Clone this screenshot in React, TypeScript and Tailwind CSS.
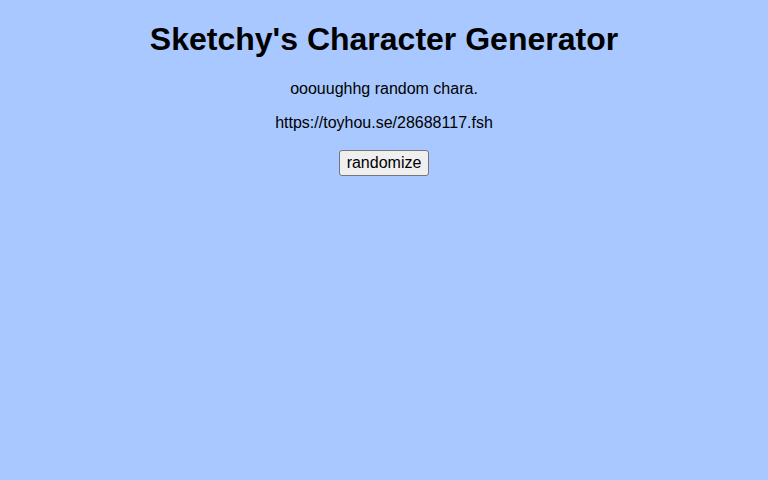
export default function App() {
  return (
    <div className="min-h-screen bg-[#a8c8ff] text-center text-black [font-family:'Liberation_Sans',Arial,sans-serif] pt-[21px]">
      <h1 className="text-[32px] font-bold leading-[37px] mb-[22px]">Sketchy's Character Generator</h1>
      <p className="text-base leading-[18px] mb-4">ooouughhg random chara.</p>
      <p className="text-base leading-[18px] mb-[18px]">https://toyhou.se/28688117.fsh</p>
      <button className="text-base leading-[18px] px-[7px] py-[3px] bg-[#efefef] border border-[#767676] rounded-[3px]">
        randomize
      </button>
    </div>
  )
}
